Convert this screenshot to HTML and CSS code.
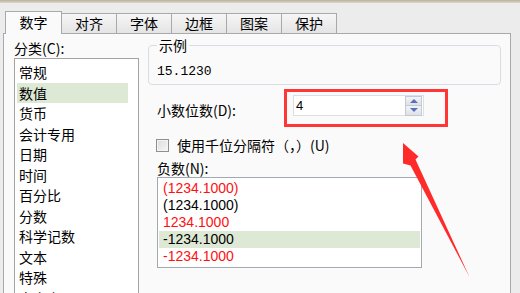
FILE: index.html
```html
<!DOCTYPE html>
<html lang="zh-CN">
<head>
  <meta charset="UTF-8">
  <title>设置单元格格式</title>
  <link rel="stylesheet" href="styles.css">
</head>
<body>
  <div class="topbar"></div>

  <div class="tabs">
    <div class="tab active">数字</div>
    <div class="tab">对齐</div>
    <div class="tab">字体</div>
    <div class="tab">边框</div>
    <div class="tab">图案</div>
    <div class="tab">保护</div>
  </div>

  <div class="panel">
    <div class="left">
      <div class="label">分类(C):</div>
      <ul class="listbox">
        <li>常规</li>
        <li class="selected">数值</li>
        <li>货币</li>
        <li>会计专用</li>
        <li>日期</li>
        <li>时间</li>
        <li>百分比</li>
        <li>分数</li>
        <li>科学记数</li>
        <li>文本</li>
        <li>特殊</li>
        <li>自定义</li>
      </ul>
    </div>

    <div class="right">
      <fieldset class="sample">
        <legend>示例</legend>
        <div class="sample-value">15.1230</div>
      </fieldset>

      <div class="decimal-row">
        <span class="row-label">小数位数(D):</span>
        <div class="highlight-box">
          <div class="spinbox">
            <span class="spin-value">4</span>
            <span class="spin-buttons">
              <span class="spin-btn"><span class="arrow-up"></span></span>
              <span class="spin-btn"><span class="arrow-down"></span></span>
            </span>
          </div>
        </div>
      </div>

      <div class="check-row">
        <span class="checkbox"></span>
        <span>使用千位分隔符（，）(U)</span>
      </div>

      <div class="label neg-label">负数(N):</div>
      <ul class="neglist">
        <li class="red">(1234.1000)</li>
        <li>(1234.1000)</li>
        <li class="red">1234.1000</li>
        <li class="selected">-1234.1000</li>
        <li class="red">-1234.1000</li>
      </ul>
    </div>
  </div>

  <!-- annotation arrow drawn over the dialog -->
  <svg class="annotation" width="520" height="293" viewBox="0 0 520 293">
    <polygon points="403,143 418.5,156.5 415.5,159.5 469.5,277 410.5,165.5 403,163.5" fill="#ff2b2b"/>
  </svg>
</body>
</html>
```

FILE: styles.css
```css
body {
  margin: 0;
  width: 520px;
  height: 293px;
  overflow: hidden;
  background: #ececec;
  font-family: "Noto Sans CJK SC", "DejaVu Sans", sans-serif;
  font-size: 14px;
  color: #000;
  position: relative;
}
ul {
  list-style: none;
  margin: 0;
  padding: 0;
}
.topbar {
  height: 3px;
  background: linear-gradient(#b9b19d, #ddd8ca);
}

/* tabs */
.tabs {
  display: flex;
  align-items: flex-end;
  padding-left: 5px;
  margin-top: 9px;
  height: 21px;
}
.tab {
  width: 54px;
  height: 19px;
  line-height: 19px;
  text-align: center;
  border: 1px solid #a9a9a9;
  border-bottom: none;
  border-left: none;
  background: linear-gradient(#f6f6f6, #e4e4e4);
}
.tab.active {
  position: relative;
  z-index: 1;
  width: 55px;
  height: 22px;
  line-height: 21px;
  margin-bottom: -1px;
  border-left: 1px solid #a9a9a9;
  background: #fafafa;
}

/* panel */
.panel {
  display: flex;
  gap: 9px;
  margin-left: 3px;
  width: 506px;
  height: 260px;
  border: 1px solid #a9a9a9;
  border-bottom: none;
  background: #fafafa;
}
.left {
  padding-left: 10px;
  padding-top: 4px;
}
.label {
  line-height: 20px;
  height: 20px;
}
.listbox {
  width: 123px;
  height: 300px;
  border: 1px solid #a3a3a3;
  background: #fff;
  padding-top: 3px;
}
.listbox li {
  height: 20.5px;
  line-height: 20.5px;
  margin: 0 10px 0 2px;
  padding-left: 2px;
}
.listbox li.selected {
  background: #dde9d5;
}

.right {
  padding-top: 3px;
  width: 353px;
}
.sample {
  margin: 0;
  padding: 0 8px 2px 8px;
  border: 1px solid #d8dee6;
  border-radius: 4px;
  height: 48px;
  box-sizing: border-box;
}
.sample legend {
  padding: 0 2px;
  margin-left: 0;
  line-height: 16px;
}
.sample-value {
  font-family: "Liberation Mono", monospace;
  font-size: 13px;
  line-height: 20px;
  padding-top: 9px;
}

.decimal-row {
  display: flex;
  align-items: center;
  margin-top: 4px;
  padding-left: 9px;
}
.row-label {
  width: 127px;
  padding-top: 3px;
}
.highlight-box {
  border: 3px solid #ff3636;
  padding: 3px 21px 8px 6px;
}
.spinbox {
  width: 131px;
  height: 21px;
  box-sizing: border-box;
  border: 1px solid #d9dfe6;
  background: #fff;
  display: flex;
  justify-content: space-between;
  align-items: center;
}
.spin-value {
  font-family: "Liberation Sans", sans-serif;
  font-size: 13px;
  padding-left: 2px;
}
.spin-buttons {
  display: flex;
  flex-direction: column;
  margin-right: 1px;
}
.spin-btn {
  width: 15px;
  height: 8px;
  border: 1px solid #c4cad2;
  background: linear-gradient(#f2f4f7, #dde2e8);
  display: flex;
  justify-content: center;
  align-items: center;
}
.spin-btn + .spin-btn {
  border-top: none;
  height: 9px;
}
.arrow-up {
  border-left: 4px solid transparent;
  border-right: 4px solid transparent;
  border-bottom: 4px solid #5b70b8;
}
.arrow-down {
  border-left: 4px solid transparent;
  border-right: 4px solid transparent;
  border-top: 4px solid #5b70b8;
}

.check-row {
  display: flex;
  align-items: center;
  gap: 8px;
  height: 20px;
  margin-top: 8px;
  padding-left: 8px;
}
.checkbox {
  width: 11px;
  height: 11px;
  border: 1px solid #8e8f8f;
  background: linear-gradient(135deg, #dcdcdc, #f6f6f6);
  box-shadow: inset 0 0 0 1px #f4f4f4;
}

.neg-label {
  margin-top: 5px;
  padding-left: 9px;
  height: 17px;
  line-height: 17px;
}
.neglist {
  margin-left: 9px;
  width: 265px;
  height: 91px;
  border: 1px solid #a3a9b1;
  background: #fff;
  padding-top: 2px;
  box-sizing: border-box;
  font-family: "Liberation Sans", sans-serif;
  font-size: 14px;
}
.neglist li {
  height: 17px;
  line-height: 17px;
  margin: 0 1px;
  padding-left: 4px;
}
.neglist li.red {
  color: #ff1010;
}
.neglist li.selected {
  background: #dde9d5;
}

.annotation {
  position: absolute;
  left: 0;
  top: 0;
}
```
